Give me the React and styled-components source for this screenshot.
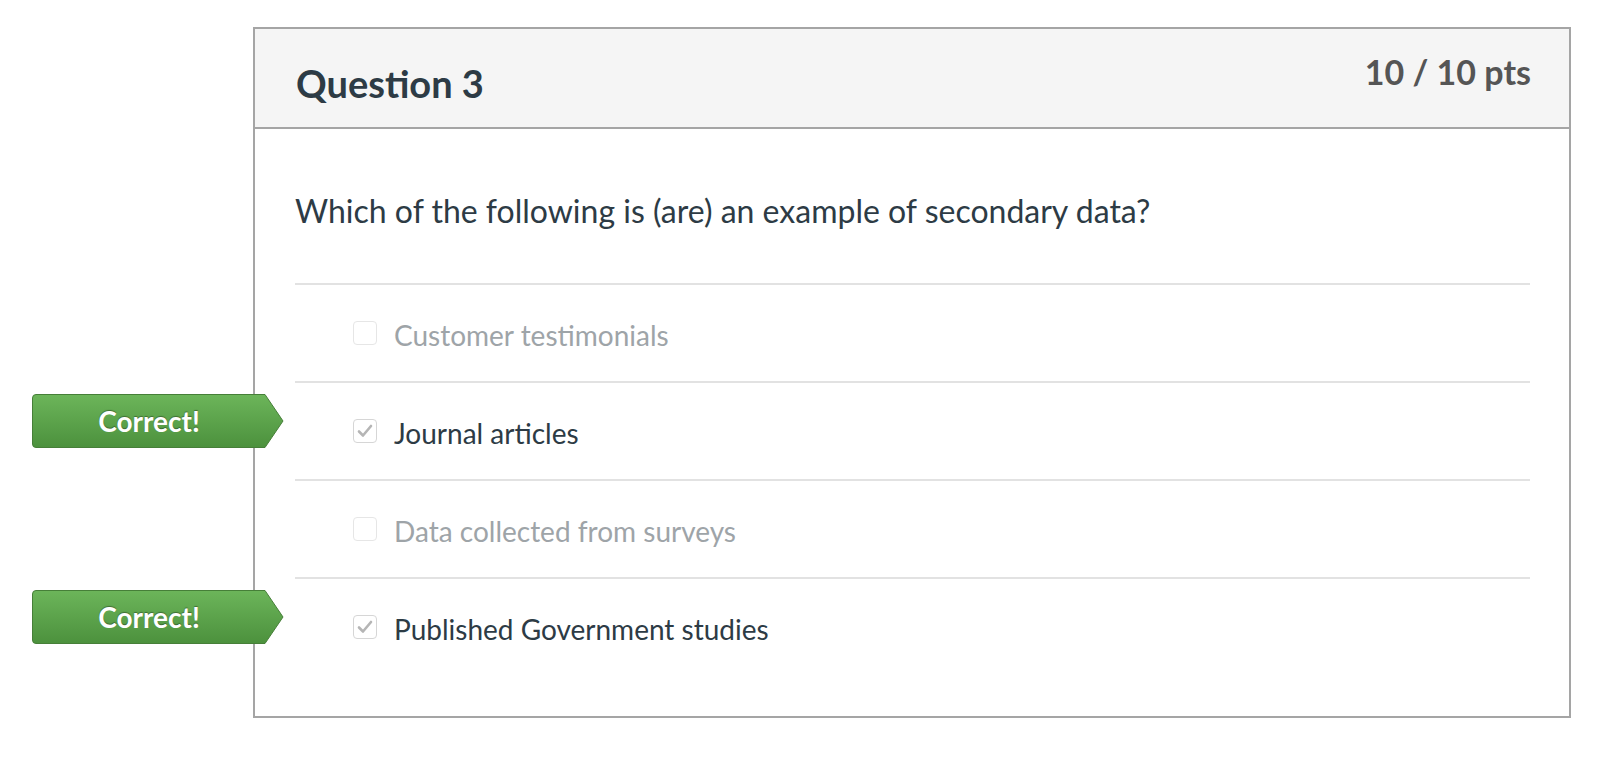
import styled, { createGlobalStyle } from "styled-components";

const answers = [
  { text: "Customer testimonials", checked: false },
  { text: "Journal articles", checked: true },
  { text: "Data collected from surveys", checked: false },
  { text: "Published Government studies", checked: true },
];

const App = () => {
  return (
    <>
      <GlobalStyle />
      <Page>
        <Card>
          <Header>
            <Title>Question 3</Title>
            <Points>10 / 10 pts</Points>
          </Header>

          <Body>
            <QuestionText>
              Which of the following is (are) an example of secondary data?
            </QuestionText>

            <Answers>
              {answers.map((a) => (
                <Row key={a.text}>
                  {a.checked && (
                    <Badge>
                      <BadgeShape viewBox="0 0 252 54" preserveAspectRatio="none">
                        <defs>
                          <linearGradient id="green" x1="0" y1="0" x2="0" y2="1">
                            <stop offset="0" stopColor="#6cb55a" />
                            <stop offset="1" stopColor="#4c913d" />
                          </linearGradient>
                        </defs>
                        <path
                          d="M4 0.5 H233 L251 27 L233 53.5 H4 Q0.5 53.5 0.5 50 V4 Q0.5 0.5 4 0.5 Z"
                          fill="url(#green)"
                          stroke="#467f38"
                          strokeWidth="1"
                        />
                      </BadgeShape>
                      <BadgeText>Correct!</BadgeText>
                    </Badge>
                  )}
                  <Check $checked={a.checked}>
                    {a.checked && (
                      <svg width="16" height="14" viewBox="0 0 16 14">
                        <path
                          d="M2 7.5 L6 11.5 L14 2"
                          fill="none"
                          stroke="#b5b5b5"
                          strokeWidth="2.6"
                          strokeLinecap="round"
                          strokeLinejoin="round"
                        />
                      </svg>
                    )}
                  </Check>
                  <AnswerText $checked={a.checked}>{a.text}</AnswerText>
                </Row>
              ))}
            </Answers>
          </Body>
        </Card>
      </Page>
    </>
  );
};

const GlobalStyle = createGlobalStyle`
  body {
    margin: 0;
    background: #ffffff;
    font-family: Lato, "Open Sans", sans-serif;
    color: #2d3b45;
  }
`;

const Page = styled.div`
  padding: 27px 0 0 253px;
`;

const Card = styled.div`
  width: 1318px;
  box-sizing: border-box;
  border: 2px solid #a5a5a5;
  background: #ffffff;
`;

const Header = styled.div`
  display: flex;
  justify-content: space-between;
  align-items: flex-start;
  padding: 23px 38px 20px 41px;
  background: #f5f5f5;
  border-bottom: 2px solid #a5a5a5;
`;

const Title = styled.h2`
  margin: 9px 0 0;
  font-size: 38px;
  line-height: 1.2;
  font-weight: 700;
  color: #2d3b45;
`;

const Points = styled.div`
  font-size: 34px;
  line-height: 1.2;
  font-weight: 700;
  color: #555555;
`;

const Body = styled.div`
  padding: 63px 39px 41px 40px;
`;

const QuestionText = styled.p`
  margin: 0 0 53px;
  font-size: 32px;
  line-height: 1.2;
`;

const Answers = styled.div`
  display: flex;
  flex-direction: column;
`;

const Row = styled.div`
  position: relative;
  display: flex;
  align-items: center;
  gap: 17px;
  height: 96px;
  padding-left: 58px;
  border-top: 2px solid #e2e2e2;
`;

const Badge = styled.div`
  position: absolute;
  left: -263px;
  top: 11px;
  width: 252px;
  height: 54px;
  display: flex;
  align-items: center;
  justify-content: center;
  padding-right: 18px;
  box-sizing: border-box;
`;

const BadgeShape = styled.svg`
  position: absolute;
  inset: 0;
  width: 100%;
  height: 100%;
`;

const BadgeText = styled.span`
  position: relative;
  color: #ffffff;
  font-size: 28px;
  font-weight: 700;
  text-shadow: 0 -1px 1px rgba(0, 0, 0, 0.35);
`;

const Check = styled.span`
  flex: none;
  width: 24px;
  height: 24px;
  box-sizing: border-box;
  border: 1px solid ${(p) => (p.$checked ? "#d6d6d6" : "#e6e6e6")};
  border-radius: 4px;
  background: #ffffff;
  display: flex;
  align-items: center;
  justify-content: center;
`;

const AnswerText = styled.span`
  margin-top: 4px;
  font-size: 28px;
  color: ${(p) => (p.$checked ? "#2d3b45" : "#9ea4a8")};
`;

export default App;
